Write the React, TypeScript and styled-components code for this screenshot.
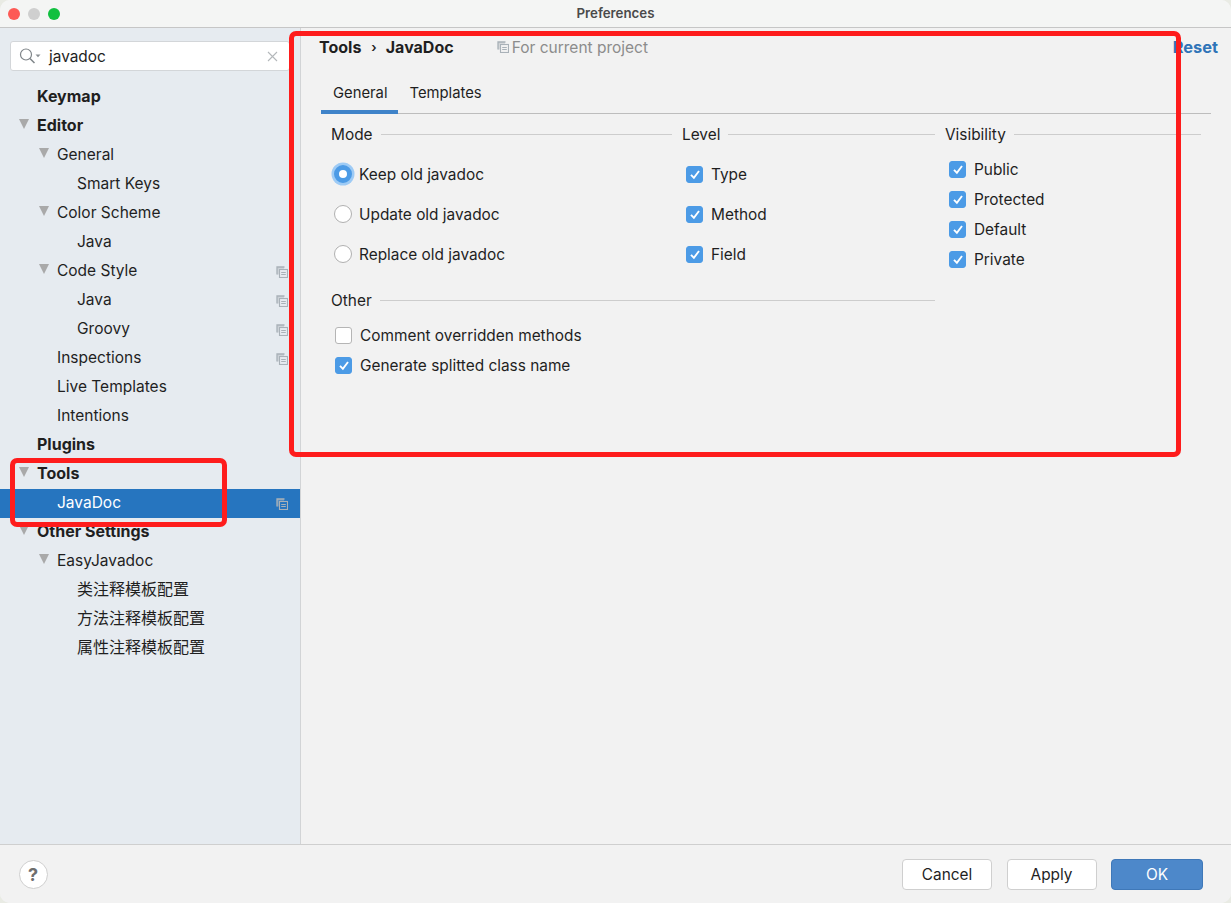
import styled, { createGlobalStyle } from 'styled-components'

const GlobalStyle = createGlobalStyle`
  html, body {
    margin: 0;
    padding: 0;
    background: #e9ebe4;
  }
  body {
    font-family: Inter, "Noto Sans CJK SC", sans-serif;
    font-size: 15.4px;
    color: #1f1f1f;
  }
  * {
    box-sizing: border-box;
  }
`

const Window = styled.div`
  position: relative;
  width: 1231px;
  height: 903px;
  display: flex;
  flex-direction: column;
  background: #f2f2f2;
  border-radius: 10px;
  overflow: hidden;
`

const TitleBar = styled.div`
  position: relative;
  height: 28px;
  flex: none;
  display: flex;
  align-items: center;
  justify-content: center;
  background: #f4f5f4;
  border-bottom: 1px solid #c6c6c6;
  font-size: 13.300px;
  font-weight: 600;
  color: #4a4a4a;
  padding-bottom: 1px;
`

const Dots = styled.div`
  position: absolute;
  left: 8px;
  top: 8px;
  display: flex;
  gap: 8px;
`

const Dot = styled.span<{ $color: string }>`
  width: 12px;
  height: 12px;
  border-radius: 50%;
  background: ${({ $color }) => $color};
`

const Body = styled.div`
  flex: 1;
  min-height: 0;
  display: flex;
`

const Sidebar = styled.aside`
  width: 301px;
  flex: none;
  background: #e6ebf0;
  border-right: 1px solid #d2d4d6;
  padding-top: 13px;
`

const SearchBox = styled.div`
  height: 30px;
  margin: 0 10px 12px;
  display: flex;
  align-items: center;
  padding: 0 11px 0 8px;
  background: #fff;
  border: 1px solid #d3d6d9;
  border-radius: 3px;
`

const SearchText = styled.span`
  flex: 1;
  margin-left: 8px;
  font-size: 15.400px;
`

const Row = styled.div<{ $level: number; $selected?: boolean }>`
  height: 29px;
  display: flex;
  align-items: center;
  padding-left: ${({ $level }) => 18 + $level * 20}px;
  padding-right: 12px;
  background: ${({ $selected }) => ($selected ? '#2675bf' : 'transparent')};
  color: ${({ $selected }) => ($selected ? '#fff' : 'inherit')};
`

const ArrowSlot = styled.span`
  width: 19px;
  flex: none;
  display: flex;
`

const Arrow = styled.span`
  width: 0;
  height: 0;
  margin: -6px 0 0 1px;
  border-left: 5.5px solid transparent;
  border-right: 5.5px solid transparent;
  border-top: 10px solid #a9a9a9;
`

const RowLabel = styled.span<{ $bold?: boolean; $cjk?: boolean }>`
  flex: 1;
  line-height: 20px;
  padding-bottom: ${({ $cjk, $bold }) => ($cjk || $bold ? 4 : 2)}px;
  font-weight: ${({ $bold }) => ($bold ? 700 : 400)};
  font-size: ${({ $cjk, $bold }) => ($cjk || $bold ? 16 : 15.5)}px;
`

const Main = styled.main`
  flex: 1;
  min-width: 0;
  display: flex;
  flex-direction: column;
`

const Header = styled.div`
  height: 38px;
  flex: none;
  display: flex;
  align-items: center;
  padding: 0 13px 0 18px;
`

const Crumb = styled.span`
  font-size: 16px;
  font-weight: 700;
`

const CrumbSep = styled.span`
  margin: 0 9px 0 10px;
  font-size: 13px;
  font-weight: 600;
`

const Scope = styled.span`
  flex: 1;
  display: flex;
  align-items: center;
  gap: 3px;
  margin-left: 43px;
  color: #8c8c8c;
  font-size: 15.500px;
`

const ResetLink = styled.a`
  font-size: 16.400px;
  font-weight: 700;
  color: #2f74b8;
`

const TabBar = styled.div`
  height: 48px;
  margin: 0 20px 0 20px;
  display: flex;
  align-items: flex-end;
  border-bottom: 1px solid #bdbdbd;
`

const Tab = styled.div<{ $active?: boolean; $pad: number }>`
  height: 38px;
  padding: 0 ${({ $pad }) => $pad}px 1px 12px;
  display: flex;
  align-items: center;
  font-size: 14.800px;
  margin-bottom: -1px;
  border-bottom: 4px solid ${({ $active }) => ($active ? '#3f83c9' : 'transparent')};
`

const Options = styled.div`
  display: grid;
  grid-template-columns: 341px 253px 256px;
  grid-template-rows: auto auto;
  column-gap: 10px;
  padding: 9px 0 0 30px;
  justify-content: start;
  align-items: start;
`

const Group = styled.section<{ $span?: number; $rows?: number; $top?: number }>`
  grid-column: span ${({ $span }) => $span ?? 1};
  grid-row: span ${({ $rows }) => $rows ?? 1};
  margin-top: ${({ $top }) => $top ?? 0}px;
`

const GroupTitle = styled.div`
  display: flex;
  align-items: center;
  height: 22px;
  gap: 8px;
  &::after {
    content: '';
    flex: 1;
    height: 1px;
    background: #cdcdcd;
  }
`

const OptionList = styled.div<{ $gap: number; $top: number; $left: number }>`
  display: flex;
  flex-direction: column;
  gap: ${({ $gap }) => $gap}px;
  margin-top: ${({ $top }) => $top}px;
  padding-left: ${({ $left }) => $left}px;
`

const Option = styled.label<{ $gap?: number }>`
  display: flex;
  align-items: center;
  gap: ${({ $gap }) => $gap ?? 8}px;
  height: 20px;
`

const CheckBox = styled.span<{ $on?: boolean }>`
  width: 17px;
  height: 17px;
  flex: none;
  display: flex;
  align-items: center;
  justify-content: center;
  border-radius: 3px;
  background: ${({ $on }) => ($on ? '#4c9be6' : '#fff')};
  border: 1px solid ${({ $on }) => ($on ? '#4c9be6' : '#b5b5b5')};
`

const Radio = styled.span<{ $on?: boolean }>`
  width: 18px;
  height: 18px;
  flex: none;
  border-radius: 50%;
  background: #fff;
  border: ${({ $on }) => ($on ? '5.5px solid #4c9be6' : '1px solid #b0b0b0')};
  box-shadow: ${({ $on }) => ($on ? '0 0 0 2.5px #9ecbf5' : 'none')};
`

const Footer = styled.footer`
  height: 59px;
  flex: none;
  display: flex;
  align-items: center;
  justify-content: space-between;
  padding: 0 28px 0 18.500px;
  background: #f2f2f2;
  border-top: 1px solid #cfcfcf;
`

const HelpButton = styled.div`
  width: 29px;
  height: 29px;
  display: flex;
  align-items: center;
  justify-content: center;
  border-radius: 50%;
  background: #fff;
  border: 1px solid #cfcfcf;
  font-size: 18px;
  font-weight: 700;
  color: #6e6e6e;
`

const Buttons = styled.div`
  display: flex;
  gap: 14.500px;
`

const Button = styled.button<{ $primary?: boolean; $width: number }>`
  width: ${({ $width }) => $width}px;
  height: 31px;
  font: inherit;
  font-size: 15.400px;
  border-radius: 4px;
  color: ${({ $primary }) => ($primary ? '#fff' : '#1f1f1f')};
  background: ${({ $primary }) => ($primary ? '#4d88ca' : '#fff')};
  border: 1px solid ${({ $primary }) => ($primary ? '#3f78b8' : '#cfcfcf')};
`

const RedFrame = styled.div<{ $x: number; $y: number; $w: number; $h: number }>`
  position: absolute;
  left: ${({ $x }) => $x}px;
  top: ${({ $y }) => $y}px;
  width: ${({ $w }) => $w}px;
  height: ${({ $h }) => $h}px;
  border: 5.500px solid #fe1c1c;
  border-radius: 7px;
  pointer-events: none;
`

const CopyIcon = ({ color = '#a9b1b8' }: { color?: string }) => (
  <svg width="12" height="12" viewBox="0 0 12 12" fill="none">
    <path d="M1 8.500V1h7.500" stroke={color} strokeWidth="1.300" />
    <path d="M1 1h7v1.800H2.800V8.500H1z" fill={color} opacity="0.500" />
    <rect x="3.500" y="3.500" width="8" height="8" stroke={color} strokeWidth="1.100" />
    <path d="M5.200 6.500h4.600M5.200 8.500h4.600" stroke={color} strokeWidth="1" />
  </svg>
)

const SearchIcon = () => (
  <svg width="22" height="18" viewBox="0 0 22 18" fill="none">
    <circle cx="7" cy="7.500" r="5.500" stroke="#7f8589" strokeWidth="1.200" />
    <path d="M11 11.500l4.500 4.500" stroke="#7f8589" strokeWidth="1.500" />
    <path d="M16.500 7.500h5l-2.500 2.800z" fill="#8a8f93" />
  </svg>
)

const ClearIcon = () => (
  <svg width="11" height="11" viewBox="0 0 11 11" fill="none">
    <path d="M1 1l9 9M10 1l-9 9" stroke="#b4b8bb" strokeWidth="1.100" />
  </svg>
)

const CheckMark = () => (
  <svg width="12" height="11" viewBox="0 0 12 11" fill="none">
    <path d="M2 5.800l2.900 3L10 2" stroke="#fff" strokeWidth="1.900" />
  </svg>
)

type TreeItem = {
  label: string
  level: number
  bold?: boolean
  open?: boolean
  copy?: boolean
  selected?: boolean
  cjk?: boolean
}

const tree: TreeItem[] = [
  { label: 'Keymap', level: 0, bold: true },
  { label: 'Editor', level: 0, bold: true, open: true },
  { label: 'General', level: 1, open: true },
  { label: 'Smart Keys', level: 2 },
  { label: 'Color Scheme', level: 1, open: true },
  { label: 'Java', level: 2 },
  { label: 'Code Style', level: 1, open: true, copy: true },
  { label: 'Java', level: 2, copy: true },
  { label: 'Groovy', level: 2, copy: true },
  { label: 'Inspections', level: 1, copy: true },
  { label: 'Live Templates', level: 1 },
  { label: 'Intentions', level: 1 },
  { label: 'Plugins', level: 0, bold: true },
  { label: 'Tools', level: 0, bold: true, open: true },
  { label: 'JavaDoc', level: 1, copy: true, selected: true },
  { label: 'Other Settings', level: 0, bold: true, open: true },
  { label: 'EasyJavadoc', level: 1, open: true },
  { label: '类注释模板配置', level: 2, cjk: true },
  { label: '方法注释模板配置', level: 2, cjk: true },
  { label: '属性注释模板配置', level: 2, cjk: true }
]

export default function App() {
  return (
    <>
      <GlobalStyle />
      <Window>
        <TitleBar>
          <Dots>
            <Dot $color="#fd5a55" />
            <Dot $color="#cfcfcf" />
            <Dot $color="#10c03f" />
          </Dots>
          Preferences
        </TitleBar>
        <Body>
          <Sidebar>
            <SearchBox>
              <SearchIcon />
              <SearchText>javadoc</SearchText>
              <ClearIcon />
            </SearchBox>
            {tree.map((item, index) => (
              <Row key={index} $level={item.level} $selected={item.selected}>
                <ArrowSlot>{item.open && <Arrow />}</ArrowSlot>
                <RowLabel $bold={item.bold} $cjk={item.cjk}>{item.label}</RowLabel>
                {item.copy && <CopyIcon />}
              </Row>
            ))}
          </Sidebar>
          <Main>
            <Header>
              <Crumb>Tools</Crumb>
              <CrumbSep>›</CrumbSep>
              <Crumb>JavaDoc</Crumb>
              <Scope>
                <CopyIcon />
                For current project
              </Scope>
              <ResetLink>Reset</ResetLink>
            </Header>
            <TabBar>
              <Tab $active $pad={10}>General</Tab>
              <Tab $pad={12}>Templates</Tab>
            </TabBar>
            <Options>
              <Group>
                <GroupTitle>Mode</GroupTitle>
                <OptionList $gap={20} $top={19} $left={3}>
                  <Option $gap={7}><Radio $on />Keep old javadoc</Option>
                  <Option $gap={7}><Radio />Update old javadoc</Option>
                  <Option $gap={7}><Radio />Replace old javadoc</Option>
                </OptionList>
              </Group>
              <Group>
                <GroupTitle>Level</GroupTitle>
                <OptionList $gap={20} $top={19} $left={4}>
                  <Option><CheckBox $on><CheckMark /></CheckBox>Type</Option>
                  <Option><CheckBox $on><CheckMark /></CheckBox>Method</Option>
                  <Option><CheckBox $on><CheckMark /></CheckBox>Field</Option>
                </OptionList>
              </Group>
              <Group $rows={2}>
                <GroupTitle>Visibility</GroupTitle>
                <OptionList $gap={10} $top={14} $left={4}>
                  <Option><CheckBox $on><CheckMark /></CheckBox>Public</Option>
                  <Option><CheckBox $on><CheckMark /></CheckBox>Protected</Option>
                  <Option><CheckBox $on><CheckMark /></CheckBox>Default</Option>
                  <Option><CheckBox $on><CheckMark /></CheckBox>Private</Option>
                </OptionList>
              </Group>
              <Group $span={2} $top={25}>
                <GroupTitle>Other</GroupTitle>
                <OptionList $gap={10} $top={14} $left={4}>
                  <Option><CheckBox />Comment overridden methods</Option>
                  <Option><CheckBox $on><CheckMark /></CheckBox>Generate splitted class name</Option>
                </OptionList>
              </Group>
            </Options>
          </Main>
        </Body>
        <Footer>
          <HelpButton>?</HelpButton>
          <Buttons>
            <Button $width={90}>Cancel</Button>
            <Button $width={90}>Apply</Button>
            <Button $primary $width={92}>OK</Button>
          </Buttons>
        </Footer>
        <RedFrame $x={289} $y={31} $w={892} $h={426} />
        <RedFrame $x={10} $y={458} $w={217} $h={69} />
      </Window>
    </>
  )
}
